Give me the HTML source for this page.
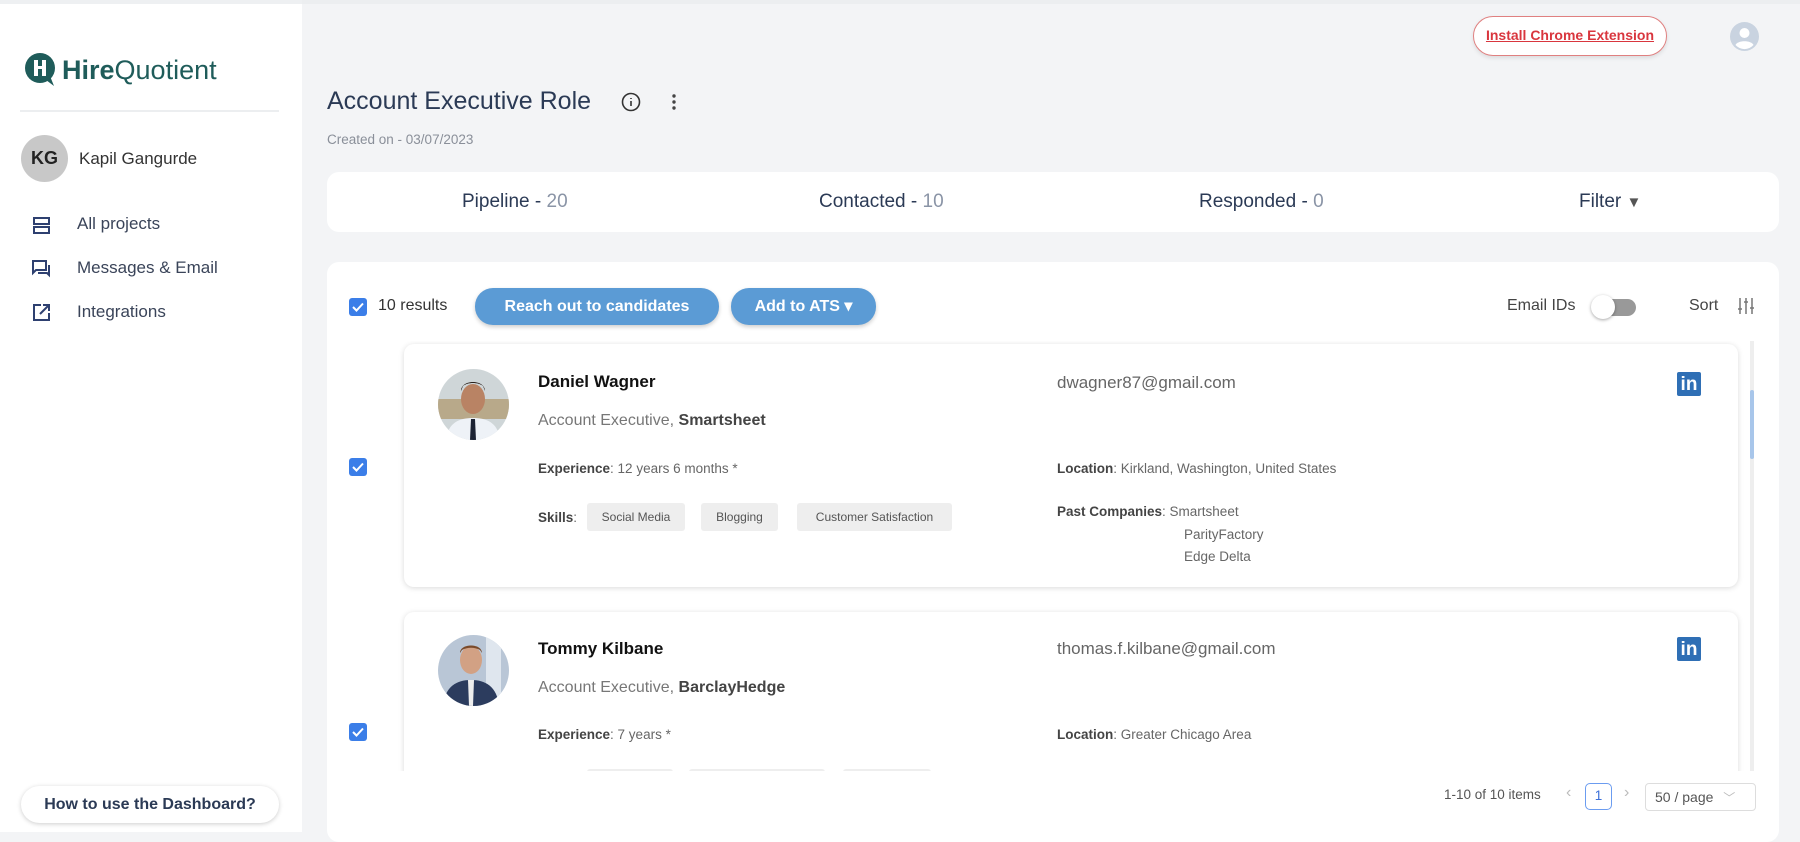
<!DOCTYPE html>
<html><head><meta charset="utf-8"><style>
*{box-sizing:border-box;margin:0;padding:0}
body{width:1800px;height:832px;overflow:hidden;background:#f3f4f6;font-family:"Liberation Sans",sans-serif;position:relative;color:#2b3a55}
.abs{position:absolute}
.side{left:0;top:0;width:302px;height:832px;background:#fff;border-top:4px solid #eef0f2}
.nav{left:77px;font-size:17px;color:#3a4459}
.cb{width:18px;height:18px;background:#3b7ee8;border-radius:3px}
.cb svg{display:block}
.btn{background:#5b9bd5;color:#fff;border-radius:18px;font-size:16px;font-weight:bold;text-align:center;line-height:37px;box-shadow:0 2px 4px rgba(0,0,0,.2)}
.card{background:#fff;border-radius:10px;box-shadow:0 1px 6px rgba(0,0,0,.15)}
.tag{background:#eeeeee;border-radius:3px;font-size:12px;color:#555;height:28px;line-height:28px;text-align:center}
.lbl{font-size:13.5px;color:#666}
.lbl b{color:#444}
</style></head><body>
<div class="abs side">
  <svg class="abs" style="left:24px;top:48px" width="34" height="36" viewBox="0 0 34 36"><circle cx="16" cy="16" r="15" fill="#1f5c5a"/><path d="M22 28 L30 34 L26 24Z" fill="#1f5c5a"/><rect x="10" y="8" width="4" height="16" fill="#fff"/><rect x="18" y="8" width="4" height="16" fill="#fff"/><rect x="13" y="14" width="6" height="3" fill="#fff"/></svg>
  <div class="abs" style="left:62px;top:51px;font-size:27px;color:#1f5c5a"><b>Hire</b>Quotient</div>
  <div class="abs" style="left:20px;top:106px;width:259px;height:2px;background:#eceef0"></div>
  <div class="abs" style="left:21px;top:131px;width:47px;height:47px;border-radius:50%;background:#c8c8c8;text-align:center;line-height:47px;font-weight:bold;font-size:18px;color:#222">KG</div>
  <div class="abs" style="left:79px;top:145px;font-size:17px;color:#333">Kapil Gangurde</div>
  <svg class="abs" style="left:32px;top:212px" width="19" height="19" viewBox="0 0 19 19" fill="none" stroke="#2e4070" stroke-width="2"><rect x="2" y="2" width="15" height="6"/><rect x="2" y="11" width="15" height="6"/></svg>
  <div class="abs nav" style="top:210px">All projects</div>
  <svg class="abs" style="left:31px;top:255px" width="21" height="20" viewBox="0 0 21 20" fill="none" stroke="#2e4070" stroke-width="2"><path d="M2 2h13v9H5l-3 3z"/><path d="M18 6v10l-2-2H7"/></svg>
  <div class="abs nav" style="top:254px">Messages &amp; Email</div>
  <svg class="abs" style="left:32px;top:299px" width="19" height="19" viewBox="0 0 19 19" fill="none" stroke="#2e4070" stroke-width="2"><path d="M9 2H2v15h15v-7"/><path d="M8 11L17 2M11 2h6v6"/></svg>
  <div class="abs nav" style="top:298px">Integrations</div>
  <div class="abs" style="left:21px;top:782px;width:258px;height:37px;border-radius:19px;background:#fff;box-shadow:0 1px 5px rgba(0,0,0,.2);text-align:center;line-height:37px;font-size:16px;font-weight:bold;color:#2b3a55">How to use the Dashboard?</div>
</div>
<div class="abs" style="left:302px;top:0;width:1498px;height:4px;background:#eceef0"></div>

<div class="abs" style="left:1473px;top:16px;width:194px;height:40px;border:1.5px solid #e08080;border-radius:20px;background:#fff;box-shadow:0 2px 4px rgba(0,0,0,.1);text-align:center;line-height:37px;font-size:14px;font-weight:bold;color:#d9363e;text-decoration:underline">Install Chrome Extension</div>
<svg class="abs" style="left:1730px;top:22px" width="29" height="29" viewBox="0 0 29 29"><circle cx="14.5" cy="14.5" r="14.5" fill="#c9d3e0"/><circle cx="14.5" cy="11" r="5" fill="#fff"/><path d="M5.5 23c2-5 16-5 18 0a12 12 0 0 1-18 0z" fill="#fff"/></svg>

<div class="abs" style="left:327px;top:87px;font-size:25px;color:#2b3a55">Account Executive Role</div>
<svg class="abs" style="left:621px;top:92px" width="20" height="20" viewBox="0 0 20 20" fill="none" stroke="#333" stroke-width="1.6"><circle cx="10" cy="10" r="8.5"/><path d="M10 9v5M10 6v1"/></svg>
<svg class="abs" style="left:671px;top:93px" width="6" height="18" viewBox="0 0 6 18" fill="#444"><circle cx="3" cy="3" r="1.7"/><circle cx="3" cy="9" r="1.7"/><circle cx="3" cy="15" r="1.7"/></svg>
<div class="abs" style="left:327px;top:132px;font-size:13.5px;color:#8a8f99">Created on - 03/07/2023</div>

<div class="abs" style="left:327px;top:172px;width:1452px;height:60px;background:#fff;border-radius:12px"></div>
<div class="abs" style="top:191px;left:462px;font-size:19px;color:#2b3a55">Pipeline - <span style="color:#8a94a6">20</span></div>
<div class="abs" style="top:191px;left:819px;font-size:19px;color:#2b3a55">Contacted - <span style="color:#8a94a6">10</span></div>
<div class="abs" style="top:191px;left:1199px;font-size:19px;color:#2b3a55">Responded - <span style="color:#8a94a6">0</span></div>
<div class="abs" style="top:191px;left:1579px;font-size:19px;color:#2b3a55">Filter <span style="color:#555;font-size:15px">▼</span></div>

<div class="abs" style="left:327px;top:262px;width:1452px;height:580px;background:#fff;border-radius:12px"></div>
<div class="abs cb" style="left:349px;top:298px"><svg width="18" height="18" viewBox="0 0 18 18"><path d="M4 9l3.5 3.5L14 5.5" stroke="#fff" stroke-width="2" fill="none"/></svg></div>
<div class="abs" style="left:378px;top:297px;font-size:16px;color:#333">10 results</div>
<div class="abs btn" style="left:475px;top:288px;width:244px">Reach out to candidates</div>
<div class="abs btn" style="left:731px;top:288px;width:145px">Add to ATS ▾</div>
<div class="abs" style="left:1507px;top:297px;font-size:16px;color:#444">Email IDs</div>
<div class="abs" style="left:1595px;top:299px;width:41px;height:17px;border-radius:9px;background:#999"></div>
<div class="abs" style="left:1591px;top:295px;width:24px;height:24px;border-radius:50%;background:#fff;box-shadow:0 1px 3px rgba(0,0,0,.35)"></div>
<div class="abs" style="left:1689px;top:297px;font-size:16px;color:#444">Sort</div>
<svg class="abs" style="left:1737px;top:297px" width="18" height="18" viewBox="0 0 18 18" stroke="#777" stroke-width="1.5" fill="none"><path d="M3 1v16M9 1v16M15 1v16M1 12h4M7 5h4M13 11h4"/></svg>

<div class="abs" style="left:1750px;top:341px;width:4px;height:430px;background:#eee"></div>
<div class="abs" style="left:1750px;top:390px;width:4px;height:69px;background:#a8c6ea;border-radius:2px"></div>

<div class="abs" style="left:340px;top:341px;width:1405px;height:430px;overflow:hidden">
 <div class="abs card" style="left:64px;top:3px;width:1334px;height:243px"></div>
 <div class="abs cb" style="left:9px;top:117px"><svg width="18" height="18" viewBox="0 0 18 18"><path d="M4 9l3.5 3.5L14 5.5" stroke="#fff" stroke-width="2" fill="none"/></svg></div>
 <svg class="abs" style="left:98px;top:28px" width="71" height="71" viewBox="0 0 71 71"><defs><clipPath id="c1"><circle cx="35.5" cy="35.5" r="35.5"/></clipPath></defs><g clip-path="url(#c1)"><rect width="71" height="71" fill="#cfd6d8"/><rect y="30" width="71" height="20" fill="#b8a98a"/><ellipse cx="35" cy="30" rx="12" ry="15" fill="#b98364"/><path d="M23 22c0-12 24-12 24 0l-2-5c-5-4-15-4-20 0z" fill="#2a211c"/><path d="M8 71c2-18 14-22 27-22s25 4 27 22z" fill="#eef2f7"/><path d="M33 50h4l1 21h-6z" fill="#1c2333"/></g></svg>
 <div class="abs" style="left:198px;top:31px;font-size:17px;font-weight:bold;color:#111">Daniel Wagner</div>
 <div class="abs" style="left:198px;top:71px;font-size:16px;color:#777">Account Executive, <b style="color:#444">Smartsheet</b></div>
 <div class="abs lbl" style="left:198px;top:120px"><b>Experience</b>: 12 years 6 months *</div>
 <div class="abs lbl" style="left:198px;top:169px"><b>Skills</b>:</div>
 <div class="abs tag" style="left:247px;top:162px;width:98px">Social Media</div>
 <div class="abs tag" style="left:361px;top:162px;width:77px">Blogging</div>
 <div class="abs tag" style="left:457px;top:162px;width:155px">Customer Satisfaction</div>
 <div class="abs" style="left:717px;top:32px;font-size:17px;color:#666">dwagner87@gmail.com</div>
 <div class="abs lbl" style="left:717px;top:120px"><b>Location</b>: Kirkland, Washington, United States</div>
 <div class="abs lbl" style="left:717px;top:160px;line-height:22.5px"><b>Past Companies</b>: Smartsheet<br><span style="padding-left:127px">ParityFactory</span><br><span style="padding-left:127px">Edge Delta</span></div>
 <div class="abs" style="left:1337px;top:31px;width:24px;height:24px;background:#2f6fb5;border-radius:2px;color:#fff;font-weight:bold;font-size:19px;line-height:25px;text-align:center">in</div>

 <div class="abs card" style="left:64px;top:271px;width:1334px;height:243px"></div>
 <div class="abs cb" style="left:9px;top:382px"><svg width="18" height="18" viewBox="0 0 18 18"><path d="M4 9l3.5 3.5L14 5.5" stroke="#fff" stroke-width="2" fill="none"/></svg></div>
 <svg class="abs" style="left:98px;top:294px" width="71" height="71" viewBox="0 0 71 71"><defs><clipPath id="c2"><circle cx="35.5" cy="35.5" r="35.5"/></clipPath></defs><g clip-path="url(#c2)"><rect width="71" height="71" fill="#b9c6d6"/><rect x="48" width="15" height="71" fill="#dfe6ee"/><ellipse cx="33" cy="25" rx="11" ry="14" fill="#d2a184"/><path d="M22 18c0-10 22-10 22 0l-2-3c-5-3-13-3-18 0z" fill="#7a4a2a"/><path d="M5 71c2-20 14-26 28-26s26 6 28 26z" fill="#2c3c5e"/><path d="M30 45h6l-1 26h-4z" fill="#eee"/></g></svg>
 <div class="abs" style="left:198px;top:298px;font-size:17px;font-weight:bold;color:#111">Tommy Kilbane</div>
 <div class="abs" style="left:198px;top:338px;font-size:16px;color:#777">Account Executive, <b style="color:#444">BarclayHedge</b></div>
 <div class="abs lbl" style="left:198px;top:386px"><b>Experience</b>: 7 years *</div>
 <div class="abs tag" style="left:247px;top:428px;width:86px"></div>
 <div class="abs tag" style="left:349px;top:428px;width:136px"></div>
 <div class="abs tag" style="left:503px;top:428px;width:88px"></div>
 <div class="abs" style="left:717px;top:298px;font-size:17px;color:#666">thomas.f.kilbane@gmail.com</div>
 <div class="abs lbl" style="left:717px;top:386px"><b>Location</b>: Greater Chicago Area</div>
 <div class="abs" style="left:1337px;top:296px;width:24px;height:24px;background:#2f6fb5;border-radius:2px;color:#fff;font-weight:bold;font-size:19px;line-height:25px;text-align:center">in</div>
</div>

<div class="abs" style="left:1444px;top:787px;font-size:13.5px;color:#555">1-10 of 10 items</div>
<div class="abs" style="left:1566px;top:784px;font-size:16px;color:#bbb">‹</div>
<div class="abs" style="left:1585px;top:783px;width:27px;height:27px;border:1.5px solid #6b9cf0;border-radius:5px;text-align:center;line-height:24px;font-size:13.5px;color:#3b6fd8">1</div>
<div class="abs" style="left:1624px;top:784px;font-size:16px;color:#bbb">›</div>
<div class="abs" style="left:1645px;top:783px;width:111px;height:28px;border:1px solid #ddd;border-radius:4px;font-size:14px;color:#555;line-height:26px;padding-left:9px">50 / page <span style="color:#bbb;font-size:12px;margin-left:6px">﹀</span></div>
</body></html>
